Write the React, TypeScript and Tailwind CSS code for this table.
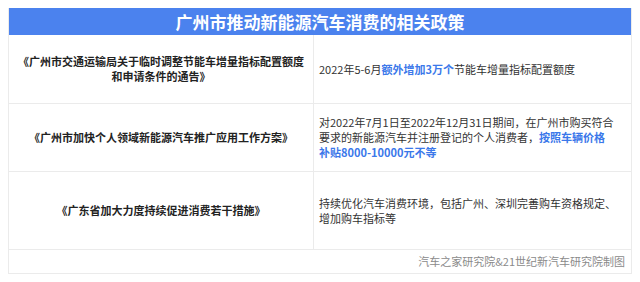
const rows = [
  {
    title: (
      <>
        《广州市交通运输局关于临时调整节能车增量指标配置额度
        <br />
        和申请条件的通告》
      </>
    ),
    body: (
      <>
        2022年5-6月<span className="font-bold text-[#3b78ea]">额外增加3万个</span>节能车增量指标配置额度
      </>
    ),
    h: 'h-[69px]',
  },
  {
    title: <>《广州市加快个人领域新能源汽车推广应用工作方案》</>,
    body: (
      <>
        对2022年7月1日至2022年12月31日期间，在广州市购买符合
        <br />
        要求的新能源汽车并注册登记的个人消费者，
        <span className="font-bold text-[#3b78ea]">
          按照车辆价格
          <br />
          补贴8000-10000元不等
        </span>
      </>
    ),
    h: 'h-[68px]',
  },
  {
    title: <>《广东省加大力度持续促进消费若干措施》</>,
    body: (
      <>
        持续优化汽车消费环境，包括广州、深圳完善购车资格规定、
        <br />
        增加购车指标等
      </>
    ),
    h: 'h-[78px]',
  },
]

export default function App() {
  return (
    <div
      className="w-[640px] h-[282px] bg-white pt-[8px] pl-[8px]"
      style={{ fontFamily: '"Noto Sans CJK SC", "Noto Sans", sans-serif' }}
    >
      <div className="w-[624px] border-x border-b border-[#ebebeb]">
        <div className="h-[27px] bg-[#4b82ee] flex items-center justify-center text-white font-bold text-[17px] leading-none">
          广州市推动新能源汽车消费的相关政策
        </div>
        {rows.map((r, i) => (
          <div key={i} className={`flex border-b border-[#ebebeb] ${r.h}`}>
            <div className="w-[304px] flex items-center justify-center text-center font-bold text-[11px] leading-[15px] text-[#222]">
              <div>{r.title}</div>
            </div>
            <div className="flex-1 border-l border-[#ebebeb] flex items-center pl-[5px] text-[11px] leading-[15px] text-[#333]">
              <div>{r.body}</div>
            </div>
          </div>
        ))}
        <div className="h-[23px] flex items-center justify-end pr-[6px] text-[11px] text-[#8a8a8a]">
          汽车之家研究院&amp;21世纪新汽车研究院制图
        </div>
      </div>
    </div>
  )
}
